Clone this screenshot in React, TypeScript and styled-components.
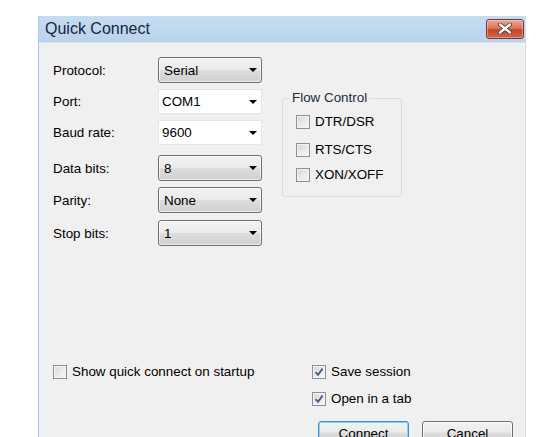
import React, { FC } from 'react';
import styled, { createGlobalStyle } from 'styled-components';

const GlobalStyle = createGlobalStyle`
    html, body {
        margin: 0;
        padding: 0;
        background: #ffffff;
        overflow: hidden;
    }
    body {
        font-family: 'Liberation Sans', Arial, sans-serif;
        font-size: 13.4px;
        color: #000;
    }
`;

const Page = styled.div`
    padding: 16px 0 0 38px;
    height: 437px;
    box-sizing: border-box;
`;

const Window = styled.div`
    width: 488px;
    height: 440px;
    box-sizing: border-box;
    border-left: 1px solid #aac6e4;
    border-right: 1px solid #d3dce6;
    background: #f0f0f0;
    display: flex;
    flex-direction: column;
`;

const TitleBar = styled.div`
    height: 27px;
    flex: none;
    display: flex;
    align-items: center;
    justify-content: space-between;
    padding: 0 1px 0 6px;
    background: linear-gradient(#c6dcf1, #bad3ec);
    border-bottom: 1px solid #d4e2f1;
    box-sizing: border-box;
`;

const Title = styled.span`
    font-size: 16px;
    color: #16263b;
    padding-bottom: 1px;
`;

const CloseButton = styled.div`
    width: 38px;
    height: 20px;
    box-sizing: border-box;
    margin-bottom: 1px;
    border: 1px solid #6d3a3a;
    border-radius: 3px;
    background: linear-gradient(#e9a797 0%, #d9775f 45%, #c8442b 55%, #d0654a 100%);
    box-shadow: inset 0 0 0 1px rgba(255, 255, 255, 0.35);
    display: flex;
    align-items: center;
    justify-content: center;
`;

const Body = styled.div`
    flex: 1;
    padding: 14px 0 0 14px;
`;

const TopArea = styled.div`
    display: flex;
    align-items: flex-start;
`;

const Form = styled.div`
    display: flex;
    flex-direction: column;
`;

const FieldRow = styled.div<{ $gap: number }>`
    display: flex;
    align-items: center;
    margin-top: ${(p) => p.$gap}px;
`;

const Label = styled.span`
    width: 105px;
`;

const Combo = styled.div<{ $editable?: boolean }>`
    width: 104px;
    height: ${(p) => (p.$editable ? 25 : 26)}px;
    box-sizing: border-box;
    display: flex;
    align-items: center;
    justify-content: space-between;
    padding: 0 4px 0 ${(p) => (p.$editable ? 3 : 5)}px;
    border: 1px solid ${(p) => (p.$editable ? '#e2e6eb' : '#707070')};
    border-radius: ${(p) => (p.$editable ? 0 : 3)}px;
    background: ${(p) =>
        p.$editable
            ? '#ffffff'
            : 'linear-gradient(#f2f2f2 0%, #ebebeb 48%, #dddddd 52%, #d0d0d0 100%)'};
    box-shadow: ${(p) => (p.$editable ? 'none' : 'inset 0 0 0 1px rgba(255,255,255,0.6)')};
`;

const Arrow = styled.span`
    width: 0;
    height: 0;
    border-left: 4px solid transparent;
    border-right: 4px solid transparent;
    border-top: 4px solid #000;
`;

const Group = styled.fieldset`
    margin: 34px 0 0 20px;
    width: 120px;
    height: 106px;
    box-sizing: border-box;
    padding: 0 0 0 13px;
    border: 1px solid #d5dfe6;
    border-radius: 3px;
`;

const Legend = styled.legend`
    padding: 0 2px;
    margin-left: -6px;
    line-height: 14px;
    color: #1b2a3f;
`;

const CheckRow = styled.label<{ $gap?: number }>`
    display: flex;
    align-items: center;
    gap: 5px;
    line-height: 15px;
    margin-top: ${(p) => p.$gap ?? 0}px;
`;

const Box = styled.span`
    width: 14px;
    height: 14px;
    box-sizing: border-box;
    flex: none;
    border: 1px solid #8f8f8f;
    background: linear-gradient(135deg, #d4d4d4 0%, #e9e9e9 50%, #f8f8f8 100%);
    box-shadow: inset 0 0 0 1px #f4f4f4;
    display: flex;
    align-items: center;
    justify-content: center;
`;

const BottomArea = styled.div`
    display: flex;
    margin-top: 118px;
`;

const LeftColumn = styled.div`
    width: 259px;
`;

const RightColumn = styled.div`
    display: flex;
    flex-direction: column;
`;

const ButtonRow = styled.div`
    display: flex;
    gap: 13px;
    margin: 15px 0 0 6px;
`;

const Button = styled.div<{ $primary?: boolean }>`
    width: 91px;
    height: 23px;
    box-sizing: border-box;
    border: 1px solid ${(p) => (p.$primary ? '#3c8fd0' : '#707070')};
    border-radius: 3px;
    background: linear-gradient(#f2f2f2 0%, #ebebeb 48%, #dddddd 52%, #cfcfcf 100%);
    box-shadow: ${(p) =>
        p.$primary ? 'inset 0 0 0 1px #8fd0f5' : 'inset 0 0 0 1px rgba(255,255,255,0.7)'};
    display: flex;
    align-items: center;
    justify-content: center;
    padding-top: 1px;
`;

const Check: FC<{ checked?: boolean; label: string; gap?: number }> = ({ checked, label, gap }) => (
    <CheckRow $gap={gap}>
        <Box>
            {checked && (
                <svg width="10" height="10" viewBox="0 0 10 10">
                    <path d="M1.5 5.2 L4 7.8 L8.6 1.6" fill="none" stroke="#3f5a8c" strokeWidth="1.8" />
                </svg>
            )}
        </Box>
        {label}
    </CheckRow>
);

const fields = [
    { label: 'Protocol:', value: 'Serial', gap: 0, editable: false },
    { label: 'Port:', value: 'COM1', gap: 6, editable: true },
    { label: 'Baud rate:', value: '9600', gap: 6, editable: true },
    { label: 'Data bits:', value: '8', gap: 10, editable: false },
    { label: 'Parity:', value: 'None', gap: 6, editable: false },
    { label: 'Stop bits:', value: '1', gap: 7, editable: false },
];

const App: FC = () => {
    return (
        <Page>
            <GlobalStyle />
            <Window>
                <TitleBar>
                    <Title>Quick Connect</Title>
                    <CloseButton>
                        <svg width="14" height="11" viewBox="0 0 14 11">
                            <path
                                d="M2 1.5 L12 9.5 M12 1.5 L2 9.5"
                                stroke="#5b2a22"
                                strokeWidth="4"
                                strokeLinecap="round"
                            />
                            <path
                                d="M2 1.5 L12 9.5 M12 1.5 L2 9.5"
                                stroke="#ffffff"
                                strokeWidth="2.4"
                                strokeLinecap="round"
                            />
                        </svg>
                    </CloseButton>
                </TitleBar>
                <Body>
                    <TopArea>
                        <Form>
                            {fields.map((f) => (
                                <FieldRow key={f.label} $gap={f.gap}>
                                    <Label>{f.label}</Label>
                                    <Combo $editable={f.editable}>
                                        {f.value}
                                        <Arrow />
                                    </Combo>
                                </FieldRow>
                            ))}
                        </Form>
                        <Group>
                            <Legend>Flow Control</Legend>
                            <Check label="DTR/DSR" gap={9} />
                            <Check label="RTS/CTS" gap={13} />
                            <Check label="XON/XOFF" gap={10} />
                        </Group>
                    </TopArea>
                    <BottomArea>
                        <LeftColumn>
                            <Check label="Show quick connect on startup" />
                        </LeftColumn>
                        <RightColumn>
                            <Check label="Save session" checked />
                            <Check label="Open in a tab" checked gap={12} />
                            <ButtonRow>
                                <Button $primary>Connect</Button>
                                <Button>Cancel</Button>
                            </ButtonRow>
                        </RightColumn>
                    </BottomArea>
                </Body>
            </Window>
        </Page>
    );
};

export default App;
